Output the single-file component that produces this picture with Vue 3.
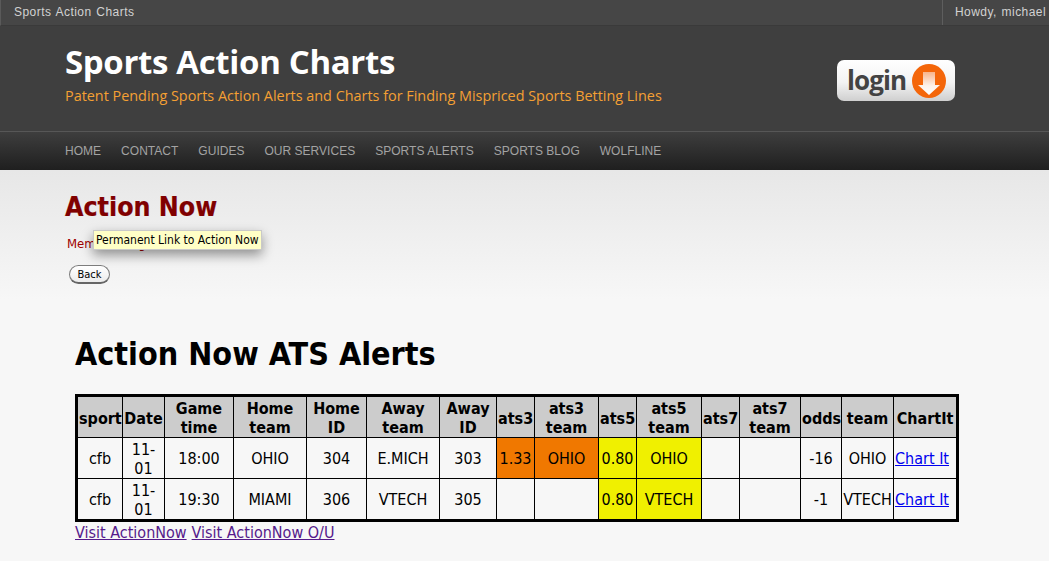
<template>
  <div class="page">
    <div class="topbar">
      <span class="top-title">Sports Action Charts</span>
      <span class="howdy">Howdy, michael</span>
    </div>

    <header class="masthead">
      <div class="brand">
        <h1>Sports Action Charts</h1>
        <p>Patent Pending Sports Action Alerts and Charts for Finding Mispriced Sports Betting Lines</p>
      </div>
      <a class="login" href="#">
        <span>login</span>
        <svg width="34" height="34" viewBox="0 0 34 34">
          <defs>
            <linearGradient id="arrowFill" x1="0" y1="0" x2="0" y2="1">
              <stop offset="0" stop-color="#f8b48a" />
              <stop offset="0.6" stop-color="#fdf3ec" />
              <stop offset="1" stop-color="#ffffff" />
            </linearGradient>
          </defs>
          <circle cx="17" cy="17" r="17" fill="#f4660a" />
          <path d="M11 8h12v13h5L17 31 6 21h5z" fill="url(#arrowFill)" />
        </svg>
      </a>
    </header>

    <nav class="mainnav">
      <a v-for="item in navItems" :key="item" href="#">{{ item }}</a>
    </nav>

    <main class="content">
      <div class="post-head">
        <h2>Action Now</h2>
        <p class="member">Members Page</p>
        <span class="tooltip">Permanent Link to Action Now</span>
        <button class="back" type="button">Back</button>
      </div>

      <section class="alerts">
        <h3>Action Now ATS Alerts</h3>
        <table>
          <thead>
            <tr>
              <th v-for="h in headers" :key="h">{{ h }}</th>
            </tr>
          </thead>
          <tbody>
            <tr v-for="row in rows" :key="row.home">
              <td>cfb</td>
              <td>11-01</td>
              <td>{{ row.time }}</td>
              <td>{{ row.home }}</td>
              <td>{{ row.homeId }}</td>
              <td>{{ row.away }}</td>
              <td>{{ row.awayId }}</td>
              <td :class="{ orange: row.ats3 }">{{ row.ats3 }}</td>
              <td :class="{ orange: row.ats3 }">{{ row.ats3Team }}</td>
              <td class="yellow">{{ row.ats5 }}</td>
              <td class="yellow">{{ row.ats5Team }}</td>
              <td></td>
              <td></td>
              <td>{{ row.odds }}</td>
              <td>{{ row.team }}</td>
              <td class="chart-cell"><a class="chart" href="#">Chart It</a></td>
            </tr>
          </tbody>
        </table>
        <div class="visit">
          <a href="#">Visit ActionNow</a>
          <a href="#">Visit ActionNow O/U</a>
        </div>
      </section>
    </main>
  </div>
</template>

<script setup>
const navItems = ['HOME', 'CONTACT', 'GUIDES', 'OUR SERVICES', 'SPORTS ALERTS', 'SPORTS BLOG', 'WOLFLINE']

const headers = [
  'sport', 'Date', 'Game time', 'Home team', 'Home ID', 'Away team', 'Away ID', 'ats3',
  'ats3 team', 'ats5', 'ats5 team', 'ats7', 'ats7 team', 'odds', 'team', 'ChartIt'
]

const rows = [
  { time: '18:00', home: 'OHIO', homeId: 304, away: 'E.MICH', awayId: 303, ats3: '1.33', ats3Team: 'OHIO', ats5: '0.80', ats5Team: 'OHIO', odds: -16, team: 'OHIO' },
  { time: '19:30', home: 'MIAMI', homeId: 306, away: 'VTECH', awayId: 305, ats3: '', ats3Team: '', ats5: '0.80', ats5Team: 'VTECH', odds: -1, team: 'VTECH' }
]
</script>

<style>
html, body {
  margin: 0;
  background: #f7f7f7;
}
</style>

<style scoped>
.page {
  height: 561px;
  overflow: hidden;
  font-family: "DejaVu Sans Condensed", "DejaVu Sans", sans-serif;
  color: #000;
}
.topbar {
  height: 25px;
  display: flex;
  justify-content: space-between;
  align-items: center;
  background: #464646;
  border-bottom: 1px solid #3a3a3a;
  border-left: 1px solid #5a5a5a;
  font: 12px/25px "Liberation Sans", Arial, sans-serif;
  color: #d2d2d2;
  word-spacing: 1px;
  letter-spacing: 0.45px;
}
.top-title {
  padding-left: 13px;
}
.howdy {
  border-left: 1px solid #5e5e5e;
  padding-left: 12px;
  width: 94px;
  white-space: nowrap;
  overflow: hidden;
}
.masthead {
  height: 105px;
  box-sizing: border-box;
  background: #3f3f3f;
  display: flex;
  justify-content: space-between;
  padding: 0 94px 0 65px;
}
.brand h1 {
  margin: 15px 0 0;
  font: 700 33px/42px "Open Sans", sans-serif;
  letter-spacing: -0.35px;
  color: #fff;
}
.brand p {
  margin: 3px 0 0;
  font: 400 14.4px/20px "Open Sans", sans-serif;
  color: #f5a033;
  white-space: nowrap;
}
.login {
  margin-top: 34px;
  width: 118px;
  height: 41px;
  box-sizing: border-box;
  padding-left: 10px;
  display: flex;
  align-items: center;
  gap: 6px;
  border-radius: 7px;
  background: linear-gradient(#ffffff, #f3f3f3 55%, #cfcfcf);
  text-decoration: none;
  font: 700 26px/38px "Open Sans", sans-serif;
  letter-spacing: -0.9px;
  color: #434343;
}
.login span {
  margin-top: -2px;
}
.mainnav {
  height: 38px;
  border-top: 1px solid #575757;
  background: linear-gradient(#3e3e3e, #1f1f1f);
  display: flex;
  align-items: center;
  gap: 20px;
  padding: 0 0 0 65px;
}
.mainnav a {
  font: 12px "Liberation Sans", Arial, sans-serif;
  letter-spacing: 0.02px;
  color: #a3a3a3;
  text-decoration: none;
}
.content {
  background: linear-gradient(#e7e7e7, #f7f7f7 130px);
  height: 391px;
  padding: 0 0 0 65px;
}
.post-head {
  position: relative;
  padding-top: 20px;
}
.post-head h2 {
  margin: 0;
  font: 700 26.5px/34px "DejaVu Sans Condensed", "DejaVu Sans", sans-serif;
  color: #800000;
  -webkit-text-stroke: 0.2px #800000;
}
.member {
  margin: 12px 0 0 2px;
  font-size: 13px;
  line-height: 16px;
  color: #a00000;
}
.tooltip {
  position: absolute;
  left: 28px;
  top: 60px;
  height: 20px;
  line-height: 18px;
  padding: 0 2px;
  box-sizing: border-box;
  background: #ffffc6;
  border: 1px solid #c9c9c9;
  font-size: 12px;
  white-space: nowrap;
  box-shadow: 0 5px 12px rgba(0, 0, 0, 0.4);
}
.back {
  display: block;
  margin: 13px 0 0 4px;
  width: 41px;
  height: 19px;
  padding: 0;
  border: 1px solid #7d7d7d;
  border-bottom: 2px solid #666;
  border-radius: 10px;
  background: linear-gradient(#ffffff, #f6f6f6 50%, #ececec);
  font: 11px "DejaVu Sans Condensed", "DejaVu Sans", sans-serif;
  color: #000;
}
.alerts {
  padding: 50px 0 0 10px;
}
.alerts h3 {
  margin: 0 0 20px;
  font: 700 32px/40px "DejaVu Sans Condensed", "DejaVu Sans", sans-serif;
}
table {
  width: 884px;
  height: 128px;
  table-layout: fixed;
  border-collapse: separate;
  border-spacing: 0;
  border: 3px solid #000;
  background: #f7f7f7;
  font-size: 16px;
  line-height: 19px;
}
th, td {
  box-sizing: border-box;
  padding: 1px 1px 0;
  text-align: center;
  border-right: 1px solid #000;
  border-bottom: 1px solid #000;
}
th:last-child, td:last-child {
  border-right: 0;
}
tbody tr:last-child td {
  border-bottom: 0;
}
th {
  background: #cccccc;
  height: 40px;
  padding-top: 2px;
  font-weight: 700;
}
td {
  height: 41px;
}
tbody tr:last-child td {
  height: 40px;
}
th:nth-child(1) { width: 45px; }
th:nth-child(2) { width: 42px; }
th:nth-child(3) { width: 69px; }
th:nth-child(4) { width: 73px; }
th:nth-child(5) { width: 60px; }
th:nth-child(6) { width: 73px; }
th:nth-child(7) { width: 57px; }
th:nth-child(8) { width: 38px; }
th:nth-child(9) { width: 64px; }
th:nth-child(10) { width: 38px; }
th:nth-child(11) { width: 65px; }
th:nth-child(12) { width: 38px; }
th:nth-child(13) { width: 61px; }
th:nth-child(14) { width: 41px; }
th:nth-child(15) { width: 52px; }
.orange { background: #f07800; }
.yellow { background: #f0f000; }
.chart-cell {
  text-align: left;
}
.chart {
  color: #0000ee;
  white-space: nowrap;
}
.visit {
  margin-top: 1px;
  font-size: 16px;
  line-height: 20px;
}
.visit a {
  color: #551a8b;
}
.visit a + a {
  margin-left: 5px;
}
</style>
